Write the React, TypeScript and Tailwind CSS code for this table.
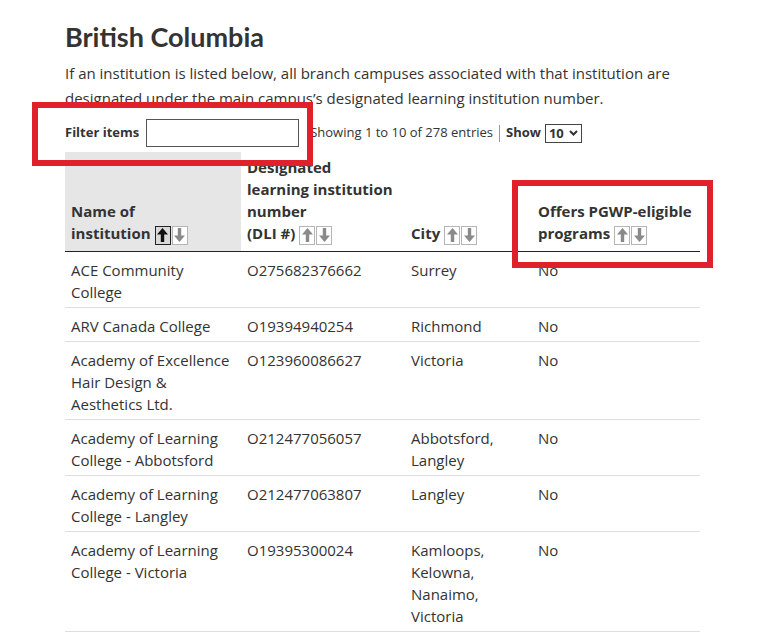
import React from "react";

function Arrow({ dir, color }: { dir: "up" | "down"; color: string }) {
  return (
    <svg width="11" height="14" viewBox="0 0 11 14" className={dir === "down" ? "rotate-180" : ""}>
      <path d="M5.5 0 L11 6.5 L7.2 6.5 L7.2 14 L3.8 14 L3.8 6.5 L0 6.5 Z" fill={color} />
    </svg>
  );
}

function SortButtons({ active }: { active?: boolean }) {
  return (
    <span className="inline-flex align-[-3px] ml-[4px] gap-[1px]">
      <span
        className={
          active
            ? "inline-flex items-center justify-center w-[16px] h-[19px] border border-[#222] bg-[#d9d9d9]"
            : "inline-flex items-center justify-center w-[16px] h-[19px] border border-[#b5b5b5] bg-white"
        }
      >
        <Arrow dir="up" color={active ? "#111" : "#8a8a8a"} />
      </span>
      <span className="inline-flex items-center justify-center w-[16px] h-[19px] border border-[#b5b5b5] bg-white">
        <Arrow dir="down" color="#8a8a8a" />
      </span>
    </span>
  );
}

const rows: string[][][] = [
  [["ACE Community", "College"], ["O275682376662"], ["Surrey"], ["No"]],
  [["ARV Canada College"], ["O19394940254"], ["Richmond"], ["No"]],
  [["Academy of Excellence", "Hair Design &", "Aesthetics Ltd."], ["O123960086627"], ["Victoria"], ["No"]],
  [["Academy of Learning", "College - Abbotsford"], ["O212477056057"], ["Abbotsford,", "Langley"], ["No"]],
  [["Academy of Learning", "College - Langley"], ["O212477063807"], ["Langley"], ["No"]],
  [["Academy of Learning", "College - Victoria"], ["O19395300024"], ["Kamloops,", "Kelowna,", "Nanaimo,", "Victoria"], ["No"]],
];

function Lines({ lines }: { lines: string[] }) {
  return (
    <>
      {lines.map((l, i) => (
        <React.Fragment key={i}>
          {i > 0 && <br />}
          {l}
        </React.Fragment>
      ))}
    </>
  );
}

export default function App() {
  return (
    <div className="relative min-h-[641px] bg-white text-[#333] font-['Open_Sans','Noto_Sans',sans-serif] pl-[65px] pt-[19px]">
      <h2 className="font-['Lato',sans-serif] font-bold text-[27px] leading-[36px] text-[#333]">British Columbia</h2>
      <p className="mt-[6px] text-[15px] leading-[25px] whitespace-nowrap">
        If an institution is listed below, all branch campuses associated with that institution are
        <br />
        designated under the main campus’s designated learning institution number.
      </p>
      <div className="mt-[8px] flex items-center h-[28px] text-[13px]">
        <label className="font-bold">Filter items</label>
        <input className="ml-[7px] w-[153px] h-[28px] border border-[#555] bg-white" />
        <span className="ml-[11px]">Showing 1 to 10 of 278 entries</span>
        <span className="mx-[6px] h-[17px] border-l border-[#999]"></span>
        <span className="font-bold">Show</span>
        <span className="ml-[4px] flex items-center gap-[5px] h-[19px] px-[3px] border border-[#444] font-bold text-[13px] leading-none">
          10
          <svg width="9" height="6" viewBox="0 0 9 6">
            <path d="M1 1 L4.5 4.5 L8 1" stroke="#333" strokeWidth="2" fill="none" />
          </svg>
        </span>
      </div>
      <table className="mt-[5px] table-fixed border-collapse w-[635px] text-[15px] leading-[22px]">
        <colgroup>
          <col className="w-[176px]" />
          <col className="w-[164px]" />
          <col className="w-[127px]" />
          <col className="w-[168px]" />
        </colgroup>
        <thead>
          <tr className="border-b border-[#222]">
            <th className="bg-[#e6e6e6] text-left align-bottom font-bold px-[6px] pt-[4px] pb-[6px]">
              Name of
              <br />
              institution
              <SortButtons active />
            </th>
            <th className="text-left align-bottom font-bold px-[6px] pt-[4px] pb-[6px] whitespace-nowrap">
              Designated
              <br />
              learning institution
              <br />
              number
              <br />
              (DLI #)
              <SortButtons />
            </th>
            <th className="text-left align-bottom font-bold px-[6px] pt-[4px] pb-[6px]">
              City
              <SortButtons />
            </th>
            <th className="text-left align-bottom font-bold px-[6px] pt-[4px] pb-[6px] whitespace-nowrap">
              Offers PGWP-eligible
              <br />
              programs
              <SortButtons />
            </th>
          </tr>
        </thead>
        <tbody>
          {rows.map((r, i) => (
            <tr key={i} className="border-b border-[#dedede]">
              {r.map((c, j) => (
                <td key={j} className="align-top px-[6px] pt-[7px] pb-[4px] whitespace-nowrap">
                  <Lines lines={c} />
                </td>
              ))}
            </tr>
          ))}
        </tbody>
      </table>
      <div className="absolute left-[32px] top-[102px] w-[281px] h-[64px] border-[6px] border-[#e0202b]"></div>
      <div className="absolute left-[512px] top-[180px] w-[201px] h-[88px] border-[6px] border-[#e0202b]"></div>
    </div>
  );
}
